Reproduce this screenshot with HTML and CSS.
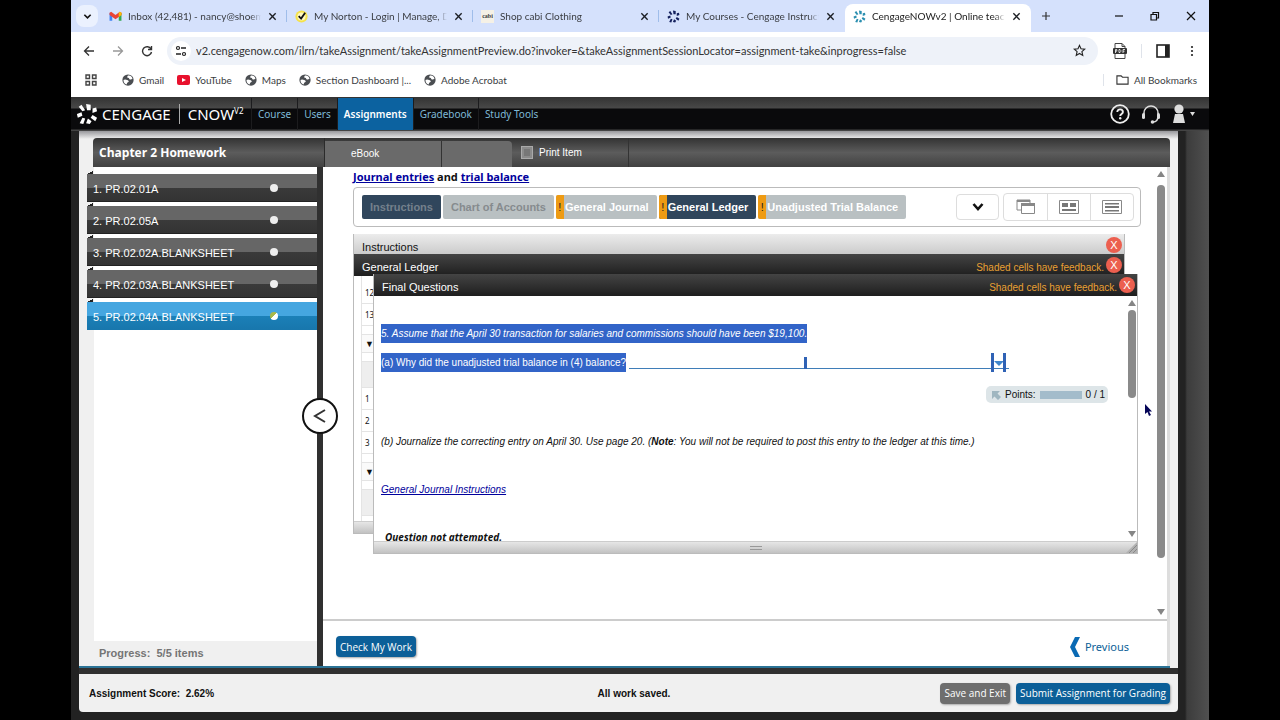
FILE: index.html
```html
<!DOCTYPE html>
<html lang="en">
<head>
    <meta charset="UTF-8">
    <meta name="viewport" content="width=device-width, initial-scale=1.0">
    <title>CengageNOWv2 | Online teaching and learning</title>
    <link rel="stylesheet" href="styles.css">
</head>
<body>
    <svg class="defs" aria-hidden="true">
        <symbol id="burst" viewBox="0 0 24 24">
            <path d="M11 1l5 1v6h-4z"/>
            <path d="M18 6l4-1 1 4-5 2z"/>
            <path d="M18 13l5 3-2 4-5-4z"/>
            <path d="M13 17l4 3-2 3-4-1z"/>
            <path d="M7 16l3 1-2 6-4-1z"/>
            <path d="M1 12l5-2 1 4-5 2z"/>
            <path d="M3 4l3-2 4 6-3 1z"/>
        </symbol>
        <symbol id="globe" viewBox="0 0 16 16">
            <circle cx="8" cy="8" r="7.5" fill="#4a4d51"/>
            <path d="M2 8c1-1 3-1 5 0s3 2 1 3-1 2-2 3C3 13 2 11 2 8zM8 2c3-.5 5 1 6 4-1 1-3 2-4 1s0-2-2-2-1-2 0-3z" fill="#fff"/>
        </symbol>
        <symbol id="cross" viewBox="0 0 10 10">
            <path d="M1.5 1.5l7 7M8.5 1.5l-7 7" fill="none" stroke="#1c1f24" stroke-width="1.5"/>
        </symbol>
    </svg>

    <div class="screen">
        <header class="browser">
            <div class="tab-strip">
                <button class="tab-search" aria-label="Search tabs">
                    <svg width="9" height="9" viewBox="0 0 10 10"><path d="M1.5 3L5 6.5 8.5 3" fill="none" stroke="#111" stroke-width="1.8"/></svg>
                </button>
                <div class="tab">
                    <svg class="favicon" viewBox="0 0 24 20"><path d="M1 3v15h5V8z" fill="#4285f4"/><path d="M23 3v15h-5V8z" fill="#34a853"/><path d="M1 3l3-2 8 6 8-6 3 2v4l-11 8L1 7z" fill="#ea4335"/><path d="M18 3l2-2 3 2v4l-5 4z" fill="#fbbc04"/></svg>
                    <span class="tab-title">Inbox (42,481) - nancy@shoem</span>
                    <button class="tab-close" aria-label="Close tab"><svg><use href="#cross"/></svg></button>
                </div>
                <div class="tab">
                    <svg class="favicon" viewBox="0 0 16 16"><circle cx="8" cy="8" r="7.5" fill="#f5e24b"/><circle cx="8" cy="8" r="5" fill="#fff8c0"/><path d="M4.5 7.5l3 3 5-7" fill="none" stroke="#111" stroke-width="2.2"/></svg>
                    <span class="tab-title">My Norton - Login | Manage, D</span>
                    <button class="tab-close" aria-label="Close tab"><svg><use href="#cross"/></svg></button>
                </div>
                <div class="tab">
                    <span class="favicon cabi">cabi</span>
                    <span class="tab-title">Shop cabi Clothing</span>
                    <button class="tab-close" aria-label="Close tab"><svg><use href="#cross"/></svg></button>
                </div>
                <div class="tab last">
                    <svg class="favicon" fill="#14205e"><use href="#burst"/></svg>
                    <span class="tab-title">My Courses - Cengage Instruct</span>
                    <button class="tab-close" aria-label="Close tab"><svg><use href="#cross"/></svg></button>
                </div>
                <div class="tab active">
                    <svg class="favicon" fill="#2b8fb0"><use href="#burst"/></svg>
                    <span class="tab-title">CengageNOWv2 | Online teach</span>
                    <button class="tab-close" aria-label="Close tab"><svg><use href="#cross"/></svg></button>
                </div>
                <button class="new-tab" aria-label="New tab"><svg width="10" height="10" viewBox="0 0 10 10"><path d="M5 1v8M1 5h8" stroke="#333" stroke-width="1.2"/></svg></button>
                <div class="window-controls">
                    <button aria-label="Minimize"><svg width="10" height="10" viewBox="0 0 10 10"><path d="M1 5h8" stroke="#111" stroke-width="1.2"/></svg></button>
                    <button aria-label="Restore"><svg width="10" height="10" viewBox="0 0 10 10"><path d="M1 3.5h5.5V9H1zM3 3V1.500h5.500V7H7" fill="none" stroke="#111" stroke-width="1.2"/></svg></button>
                    <button aria-label="Close"><svg width="10" height="10" viewBox="0 0 10 10"><path d="M1 1l8 8M9 1L1 9" stroke="#111" stroke-width="1.2"/></svg></button>
                </div>
            </div>

            <div class="toolbar">
                <button class="tool" aria-label="Back"><svg width="12" height="12" viewBox="0 0 12 12"><path d="M11 6H2M6 1.500L1.500 6 6 10.500" fill="none" stroke="#333" stroke-width="1.3"/></svg></button>
                <button class="tool" aria-label="Forward"><svg width="12" height="12" viewBox="0 0 12 12"><path d="M1 6h9M6 1.500L10.500 6 6 10.500" fill="none" stroke="#999" stroke-width="1.3"/></svg></button>
                <button class="tool" aria-label="Reload"><svg width="12" height="12" viewBox="0 0 12 12"><path d="M10 4A4.500 4.500 0 1 0 10.500 7M10.500 1v3.500H7" fill="none" stroke="#333" stroke-width="1.4"/></svg></button>
                <div class="address">
                    <button class="site-info" aria-label="Site information"><svg width="12" height="12" viewBox="0 0 12 12"><path d="M6 3h5M1 9h5" stroke="#222" stroke-width="1.4"/><circle cx="3" cy="3" r="1.5" fill="none" stroke="#222" stroke-width="1.2"/><circle cx="9" cy="9" r="1.5" fill="none" stroke="#222" stroke-width="1.2"/></svg></button>
                    <input class="url" type="text" aria-label="Address" value="v2.cengagenow.com/ilrn/takeAssignment/takeAssignmentPreview.do?invoker=&amp;takeAssignmentSessionLocator=assignment-take&amp;inprogress=false">
                    <button class="star" aria-label="Bookmark this page"><svg width="13" height="13" viewBox="0 0 14 14"><path d="M7 1.500l1.600 3.700 4 .4-3 2.700.9 4L7 10.200l-3.500 2.100.9-4-3-2.700 4-.4z" fill="none" stroke="#222" stroke-width="1.2"/></svg></button>
                </div>
                <button class="pdf" aria-label="Save as PDF"><svg width="16" height="18" viewBox="0 0 16 18"><path d="M3 6V1.500h7l3 3V6M3 12v4.500h10V12M10 1.500v3h3" fill="none" stroke="#444"/><rect x="1" y="6" width="14" height="6" rx="1" fill="#333"/><path d="M3.500 11V7.500h1.300v1.700H3.500M7 7.500v3h1l.8-1V8.300L8 7.500zM11 11V7.500h2M11 9.200h1.500" fill="none" stroke="#fff" stroke-width=".8"/></svg></button>
                <button class="side-panel" aria-label="Side panel"><svg width="14" height="14" viewBox="0 0 14 14"><rect x="1" y="1" width="12" height="12" fill="none" stroke="#222" stroke-width="1.6"/><path d="M9 1h4v12H9z" fill="#222"/></svg></button>
                <button class="more" aria-label="Menu"><svg width="4" height="12" viewBox="0 0 4 12" fill="#222"><circle cx="2" cy="2" r="1.1"/><circle cx="2" cy="6" r="1.1"/><circle cx="2" cy="10" r="1.1"/></svg></button>
            </div>

            <nav class="bookmarks">
                <button class="apps" aria-label="Apps"><svg width="12" height="12" viewBox="0 0 12 12"><path d="M1 1h3.500v3.500H1zM7.500 1H11v3.500H7.500zM1 7.500h3.500V11H1zM7.500 7.500H11V11H7.500z" fill="none" stroke="#444" stroke-width="1.4"/></svg></button>
                <a href="#"><svg class="mark"><use href="#globe"/></svg>Gmail</a>
                <a href="#"><svg class="mark wide" viewBox="0 0 13 10"><rect width="13" height="10" rx="2" fill="#e8112d"/><path d="M5 3l4 2-4 2z" fill="#fff"/></svg>YouTube</a>
                <a href="#"><svg class="mark"><use href="#globe"/></svg>Maps</a>
                <a href="#"><svg class="mark"><use href="#globe"/></svg>Section Dashboard |...</a>
                <a href="#"><svg class="mark"><use href="#globe"/></svg>Adobe Acrobat</a>
                <a href="#" class="all"><svg class="mark folder" viewBox="0 0 14 12"><path d="M1 10.500v-9h4.500L7 3h6v7.500z" fill="none" stroke="#333" stroke-width="1.2"/></svg>All Bookmarks</a>
            </nav>
        </header>

        <div class="app">
            <header class="app-header">
                <a href="#" class="brand">
                    <svg class="brand-mark" fill="#fff"><use href="#burst"/></svg>
                    <span>CENGAGE</span>
                    <span class="product">CNOW<sup>V2</sup></span>
                </a>
                <nav class="app-nav">
                    <a href="#">Course</a>
                    <a href="#">Users</a>
                    <a href="#" class="active">Assignments</a>
                    <a href="#">Gradebook</a>
                    <a href="#">Study Tools</a>
                </nav>
                <div class="app-tools">
                    <button aria-label="Help"><svg width="20" height="20" viewBox="0 0 20 20"><circle cx="10" cy="10" r="8.800" fill="none" stroke="#eee" stroke-width="1.8"/><path d="M7.300 8c0-3.600 5.600-3.400 5.600 0 0 2-2.700 2-2.700 4" fill="none" stroke="#eee" stroke-width="1.9"/><circle cx="10.200" cy="14.300" r="1.2" fill="#eee"/></svg></button>
                    <button aria-label="Support"><svg width="20" height="20" viewBox="0 0 20 20"><path d="M3 12V9a7 7 0 0 1 14 0v3c0 4-2 6-5 6" fill="none" stroke="#ddd" stroke-width="1.5"/><rect x="1" y="9" width="3" height="6" rx="1.5" fill="#ddd"/><rect x="16" y="9" width="3" height="6" rx="1.5" fill="#ddd"/><circle cx="11.500" cy="18" r="1.8" fill="#ddd"/></svg></button>
                    <button aria-label="Account"><svg width="24" height="20" viewBox="0 0 24 20" fill="#ddd"><circle cx="7" cy="5" r="4.6"/><path d="M3 10h8l2 9H1z"/><path d="M18 8h5l-2.500 4z"/></svg></button>
                </div>
            </header>

            <main class="panel">
                <div class="title-bar">
                    <h1>Chapter 2 Homework</h1>
                    <a href="#" class="book">eBook</a>
                    <span class="book-end"></span>
                    <a href="#" class="print"><svg width="12" height="13" viewBox="0 0 12 13"><rect x=".5" y=".5" width="11" height="12" fill="#8b8b8b" stroke="#aaa"/><path d="M3 3h6v7H3z" fill="#777"/></svg>Print Item</a>
                </div>

                <div class="columns">
                    <aside class="sidebar">
                        <ol class="items">
                            <li><a href="#">1. PR.02.01A<i class="dot"></i></a></li>
                            <li><a href="#">2. PR.02.05A<i class="dot"></i></a></li>
                            <li><a href="#">3. PR.02.02A.BLANKSHEET<i class="dot"></i></a></li>
                            <li><a href="#">4. PR.02.03A.BLANKSHEET<i class="dot"></i></a></li>
                            <li class="current"><a href="#">5. PR.02.04A.BLANKSHEET<i class="dot"></i></a></li>
                        </ol>
                        <p class="progress">Progress:&nbsp; 5/5 items</p>
                    </aside>
                    <div class="divider">
                        <button class="collapse" aria-label="Collapse list"><svg width="14" height="16" viewBox="0 0 14 16"><path d="M12 2L2 8l10 6" fill="none" stroke="#333" stroke-width="2"/></svg></button>
                    </div>

                    <section class="content">
                        <div class="work-area">
                            <div class="work">
                                <h2><a href="#">Journal entries</a> and <a href="#">trial balance</a></h2>
                                <div class="sheet-bar">
                                    <button class="sheet dark muted">Instructions</button>
                                    <button class="sheet muted">Chart of Accounts</button>
                                    <button class="sheet flagged">General Journal</button>
                                    <button class="sheet flagged dark">General Ledger</button>
                                    <button class="sheet flagged">Unadjusted Trial Balance</button>
                                    <button class="view expand" aria-label="More sheets"><svg width="12" height="10" viewBox="0 0 12 10"><path d="M1.500 2L6 7l4.500-5" fill="none" stroke="#111" stroke-width="2.6"/></svg></button>
                                    <div class="views">
                                        <button class="view" aria-label="Cascade"><svg width="20" height="16" viewBox="0 0 20 16"><path d="M5 11H1V1h13v3" fill="none" stroke="#888"/><path d="M1 1h13v2H1zM5 4h14v3H5z" fill="#888"/><path d="M5.500 4.500h13v10h-13z" fill="none" stroke="#888"/></svg></button>
                                        <button class="view" aria-label="Tile"><svg width="20" height="16" viewBox="0 0 20 16"><path d="M.5 1.500h19v13H.5z" fill="none" stroke="#888"/><path d="M3 4h6v4H3zM11 4h6v4h-6zM3 10h14v2H3z" fill="#777"/></svg></button>
                                        <button class="view" aria-label="Stack"><svg width="20" height="16" viewBox="0 0 20 16"><path d="M.5 1.500h19v13H.5z" fill="none" stroke="#888"/><path d="M3 4h14v1.500H3zM3 7h14v2H3zM3 11h14v1.500H3z" fill="#777"/></svg></button>
                                    </div>
                                </div>

                                <div class="canvas">
                                    <div class="window instructions">
                                        <div class="window-head light"><span>Instructions</span><button class="window-close" aria-label="Close Instructions">X</button></div>
                                    </div>
                                    <div class="window ledger">
                                        <div class="window-head"><span>General Ledger</span><em>Shaded cells have feedback.</em><button class="window-close" aria-label="Close General Ledger">X</button></div>
                                        <div class="rows">
                                            <span class="row first">12</span>
                                            <span class="row">13</span>
                                            <span class="row thin"></span>
                                            <span class="row fold">▼</span>
                                            <span class="row thin"></span>
                                            <span class="row shade"></span>
                                            <span class="row">1</span>
                                            <span class="row">2</span>
                                            <span class="row">3</span>
                                            <span class="row thin"></span>
                                            <span class="row fold">▼</span>
                                            <span class="row thin"></span>
                                            <span class="row shade"></span>
                                        </div>
                                        <div class="window-foot"></div>
                                    </div>
                                    <div class="window questions">
                                        <div class="window-head"><span>Final Questions</span><em>Shaded cells have feedback.</em><button class="window-close" aria-label="Close Final Questions">X</button></div>
                                        <div class="question-area">
                                            <div class="question-text">
                                                <p><i class="selected">5. Assume that the April 30 transaction for salaries and commissions should have been $19,100.</i></p>
                                                <div class="answer">
                                                    <label class="selected" for="reason">(a) Why did the unadjusted trial balance in (4) balance?</label>
                                                    <span class="blank">
                                                        <select id="reason"><option></option></select>
                                                        <i class="caret middle"></i>
                                                        <i class="caret near"></i>
                                                        <i class="arrow"></i>
                                                        <i class="caret end"></i>
                                                    </span>
                                                </div>
                                                <div class="points">
                                                    <svg width="10" height="10" viewBox="0 0 10 10"><path d="M1 1h8L6.500 3.500 10 7 7 10 3.500 6.500 1 9z" fill="#9fb6c0"/></svg>
                                                    <span>Points:</span><span class="meter"></span><span>0 / 1</span>
                                                </div>
                                                <p class="spaced"><i>(b) Journalize the correcting entry on April 30. Use page 20. (<b>Note</b>: You will not be required to post this entry to the ledger at this time.)</i></p>
                                                <p class="spaced"><a href="#"><i>General Journal Instructions</i></a></p>
                                                <p class="spaced status">Question not attempted.</p>
                                            </div>
                                            <div class="scrollbar"><i class="up"></i><i class="thumb short"></i><i class="down"></i></div>
                                        </div>
                                        <div class="window-foot"><i class="grip"></i><svg class="corner" width="12" height="12" viewBox="0 0 12 12"><path d="M12 1v11H1z" fill="#b0b0b0"/><path d="M12 4L4 12M12 8l-4 4" stroke="#888"/></svg></div>
                                    </div>
                                    <svg class="pointer" width="9" height="13" viewBox="0 0 9 13"><path d="M1 0v10l2.500-2L5 12l2-1-2-3.500h3z" fill="#050558"/></svg>
                                </div>
                            </div>
                            <div class="scrollbar"><i class="up"></i><i class="thumb"></i><i class="down"></i></div>
                        </div>
                        <div class="content-foot">
                            <button class="btn blue">Check My Work</button>
                            <a href="#" class="previous"><svg width="12" height="20" viewBox="0 0 12 20"><path d="M6 0h5L6 10l5 10H6L1 10z" fill="#0a6ab4"/></svg>Previous</a>
                        </div>
                    </section>
                </div>

                <footer class="score-bar">
                    <b class="score">Assignment Score:&nbsp; 2.62%</b>
                    <b class="saved">All work saved.</b>
                    <div class="actions">
                        <button class="btn">Save and Exit</button>
                        <button class="btn blue">Submit Assignment for Grading</button>
                    </div>
                </footer>
            </main>
        </div>
    </div>
</body>
</html>
```
FILE: styles.css
```css
* {
    margin: 0;
    padding: 0;
    box-sizing: border-box;
}

body {
    min-height: 100vh;
    background: #000;
    font-family: "Liberation Sans", Arial, sans-serif;
    font-size: 11px;
    color: #111;
}

button {
    border: none;
    background: none;
    font: inherit;
    color: inherit;
    cursor: pointer;
    display: flex;
    align-items: center;
    justify-content: center;
    flex-shrink: 0;
}

a {
    color: #00009c;
}

svg {
    display: block;
    flex-shrink: 0;
}

.defs {
    position: absolute;
    width: 0;
    height: 0;
}

.screen {
    height: 100vh;
    margin: 0 71px;
    display: flex;
    flex-direction: column;
    overflow: hidden;
}

/* browser chrome */
.browser {
    background: #fff;
    font-family: Lato, "Open Sans", sans-serif;
    font-size: 10px;
    color: #3a3d42;
}

.tab-strip {
    height: 32px;
    display: flex;
    align-items: center;
    background: #d5e1fc;
    padding-left: 5px;
}

.tab-search {
    width: 22px;
    height: 22px;
    border-radius: 8px;
    background: #ebf1fe;
    margin-right: 3px;
}

.tab {
    flex: 0 1 186px;
    min-width: 0;
    height: 28px;
    display: flex;
    align-items: center;
    padding: 0 8px;
    position: relative;
}

.tab::after {
    content: "";
    position: absolute;
    right: 0;
    width: 1px;
    height: 12px;
    background: #9fbdea;
}

.tab.last::after,
.tab.active::after {
    display: none;
}

.favicon {
    width: 13px;
    height: 13px;
    margin-right: 6px;
    flex-shrink: 0;
}

.cabi {
    background: #f5f1e6;
    font: bold 6px/13px "Liberation Serif", serif;
    text-align: center;
    overflow: hidden;
}

.tab-title {
    flex: 1;
    overflow: hidden;
    white-space: nowrap;
    -webkit-mask-image: linear-gradient(to right, #000 92%, transparent);
    mask-image: linear-gradient(to right, #000 92%, transparent);
}

.tab-close {
    width: 14px;
    height: 14px;
    margin-left: 4px;
}

.tab-close svg {
    width: 9px;
    height: 9px;
}

.tab.active {
    background: #fff;
    border-radius: 8px 8px 0 0;
    align-self: flex-end;
    padding-bottom: 4px;
    color: #222;
}

.new-tab {
    width: 22px;
    height: 22px;
    margin-left: 4px;
}

.window-controls {
    margin-left: auto;
    display: flex;
}

.window-controls button {
    width: 36px;
    height: 32px;
}

.toolbar {
    height: 37px;
    display: flex;
    align-items: center;
    padding: 0 10px 0 3px;
}

.tool {
    width: 29px;
    height: 28px;
}

.address {
    flex: 1;
    height: 28px;
    display: flex;
    align-items: center;
    margin-left: 6px;
    padding: 0 12px 0 4px;
    border-radius: 14px;
    background: #eef2f9;
}

.site-info {
    width: 20px;
    height: 20px;
    border-radius: 10px;
    background: #fff;
    margin-right: 5px;
}

.url {
    flex: 1;
    min-width: 0;
    border: none;
    outline: none;
    background: none;
    font: 11px Lato, "Open Sans", sans-serif;
    color: #333;
}

.pdf {
    margin-left: 14px;
    padding-right: 13px;
}

.side-panel {
    border-left: 1px solid #dfe3ea;
    padding-left: 14px;
}

.more {
    width: 14px;
    margin-left: 15px;
}

.bookmarks {
    height: 28px;
    display: flex;
    align-items: center;
    gap: 13px;
    padding: 0 12px 7px 14px;
}

.apps {
    padding-right: 12px;
}

.bookmarks a {
    display: flex;
    align-items: center;
    gap: 5px;
    color: #3a3d42;
    text-decoration: none;
    white-space: nowrap;
}

.mark {
    width: 12px;
    height: 12px;
}

.wide,
.folder {
    width: 13px;
}

.bookmarks .all {
    margin-left: auto;
    border-left: 1px solid #dfe3ea;
    padding-left: 12px;
}

/* application */
.app {
    flex: 1;
    min-height: 0;
    display: flex;
    flex-direction: column;
    background: linear-gradient(to right, #222 calc(100% - 24px), #3c3c3c calc(100% - 22px), #505050);
}

.app-header {
    height: 34px;
    display: flex;
    align-items: stretch;
    background: linear-gradient(#333 0, #484848 11px, #0a0a0c 12px, #0a0a0c 32px, #444 33px);
    font-family: "Noto Sans", "Open Sans", sans-serif;
    font-size: 10px;
    padding: 1px 13px 1px 5px;
}

.brand {
    display: flex;
    align-items: center;
    color: #fff;
    text-decoration: none;
    font-size: 15px;
    gap: 4px;
    width: 175px;
}

.brand-mark {
    width: 22px;
    height: 22px;
}

.product {
    border-left: 1px solid #aaa;
    margin-left: 4px;
    padding-left: 8px;
    line-height: 20px;
    white-space: nowrap;
}

.product sup {
    font-size: 8px;
    line-height: 8px;
}

.app-nav {
    display: flex;
}

.app-nav a {
    padding: 0 6px;
    line-height: 32px;
    color: #7fb9d6;
    text-decoration: none;
    border-left: 1px solid #1c1c1e;
}

.app-nav .active {
    background: #0c62a0;
    color: #fff;
    font-weight: 600;
}

.app-tools {
    margin-left: auto;
    display: flex;
    gap: 11px;
}

.panel {
    flex: 1;
    min-height: 0;
    display: flex;
    flex-direction: column;
    margin: 0 31px 8px 8px;
    padding-top: 7px;
    border-radius: 0 0 4px 4px;
    background: linear-gradient(#98989c, #f0f0f0 8px);
}

.title-bar {
    height: 29px;
    display: flex;
    margin: 0 8px 0 14px;
    border-radius: 4px 4px 0 0;
    background: linear-gradient(#333, #5c5c5c 50%, #414141);
    color: #fff;
    font-size: 10px;
}

.title-bar h1 {
    width: 232px;
    padding-left: 6px;
    font: bold 12px/29px "Open Sans", "Noto Sans", sans-serif;
    border-right: 1px solid #2b2b2b;
}

.title-bar a {
    color: #fff;
    text-decoration: none;
}

.book,
.book-end {
    background: #6a6a6a;
    margin-top: 3px;
}

.book {
    width: 117px;
    padding-left: 26px;
    line-height: 26px;
    border-right: 1px solid #333;
}

.book-end {
    width: 70px;
    border-radius: 0 4px 0 0;
}

.print {
    width: 117px;
    display: flex;
    align-items: center;
    gap: 6px;
    padding-left: 9px;
    border-right: 1px solid #333;
}

.columns {
    flex: 1;
    min-height: 0;
    display: flex;
    margin-right: 8px;
    border-bottom: 2px solid #2b7396;
}

.sidebar {
    width: 238px;
    display: flex;
    flex-direction: column;
    padding-left: 15px;
}

.items {
    flex: 1;
    list-style: none;
    background: #fff;
    padding-top: 4px;
}

.items li {
    margin-left: -7px;
    padding-top: 3px;
    margin-bottom: 1px;
    background: linear-gradient(to bottom right, transparent 50%, #222 50%) 0 0 / 6px 3px no-repeat;
}

.items a {
    height: 28px;
    display: flex;
    align-items: center;
    justify-content: space-between;
    padding: 2px 39px 0 6px;
    background: linear-gradient(#666 50%, #3a3a3a 51%, #333);
    border-bottom: 1px solid #222;
    color: #fff;
    font-size: 11px;
    text-decoration: none;
}

.items .current a {
    background: linear-gradient(#45a6e0 50%, #1b80b8 51%, #1877ad);
    border-bottom-color: #1877ad;
}

.dot {
    width: 8px;
    height: 8px;
    margin-bottom: 2px;
    border-radius: 50%;
    background: #eee;
}

.current .dot {
    background: linear-gradient(135deg, #a8b84a 50%, #fff 50%);
}

.progress {
    height: 25px;
    padding-left: 5px;
    font-weight: bold;
    font-size: 11px;
    line-height: 25px;
    color: #757575;
}

.divider {
    width: 6px;
    background: #303030;
    position: relative;
}

.collapse {
    position: absolute;
    top: 231px;
    left: -15px;
    width: 36px;
    height: 36px;
    border: 2px solid #111;
    border-radius: 50%;
    background: #fff;
    z-index: 5;
}

.content {
    flex: 1;
    min-width: 0;
    display: flex;
    flex-direction: column;
    background: #fff;
    border-right: 3px solid #ddd;
}

.work-area {
    flex: 1;
    min-height: 0;
    display: flex;
    border-bottom: 2px solid #ccc;
}

.work {
    flex: 1;
    min-width: 0;
    padding: 3px 14px 0 30px;
}

.work h2 {
    font: bold 11px/14px "Noto Sans", Verdana, sans-serif;
}

.sheet-bar {
    height: 40px;
    display: flex;
    align-items: center;
    gap: 2px;
    margin-top: 3px;
    padding: 0 6px 0 8px;
    border: 1px solid #bbb;
    border-radius: 4px;
}

.sheet {
    height: 24px;
    padding: 0 8px;
    border-radius: 2px;
    background: #b9c0c2;
    color: #fff;
    font-weight: bold;
    font-size: 11px;
    white-space: nowrap;
}

.sheet.dark {
    background: #30465c;
}

.sheet.muted {
    color: #868b8e;
}

.sheet.dark.muted {
    color: #74808c;
}

.sheet.flagged {
    padding-left: 0;
}

.flagged::before {
    content: "!";
    width: 8px;
    margin-right: 1px;
    line-height: 24px;
    background: #ee9b14;
    border-radius: 2px 0 0 2px;
    color: #222;
    font-weight: normal;
}

.view {
    width: 43px;
    height: 26px;
}

.expand,
.views {
    border: 1px solid #ddd;
    border-radius: 4px;
}

.expand {
    margin-left: auto;
    margin-right: 2px;
}

.views {
    display: flex;
}

.views .view + .view {
    border-left: 1px solid #ddd;
}

/* overlapping worksheet windows */
.canvas {
    position: relative;
    margin-top: 7px;
}

.window {
    position: absolute;
    display: flex;
    flex-direction: column;
    background: #fff;
    border: 1px solid #bbb;
    border-top: none;
}

.instructions {
    top: 0;
    left: 0;
    right: 16px;
}

.ledger {
    top: 20px;
    left: 0;
    right: 16px;
    height: 280px;
}

.questions {
    top: 40px;
    left: 20px;
    right: 3px;
    height: 280px;
}

.window-head {
    height: 22px;
    display: flex;
    align-items: center;
    flex-shrink: 0;
    padding: 3px 2px 0 8px;
    background: linear-gradient(#444, #1e1e1e);
    color: #fff;
}

.window-head.light {
    background: linear-gradient(#ececec, #c8c8c8);
    color: #111;
}

.window-head em {
    margin-left: auto;
    padding-top: 2px;
    font-style: normal;
    font-size: 10px;
    color: #e9a033;
}

.window-head.light .window-close {
    margin-left: auto;
}

.window-close {
    width: 16px;
    height: 16px;
    margin: 0 0 4px 2px;
    border-radius: 50%;
    background: #ec5f4f;
    color: #fff;
}

.window-foot {
    height: 12px;
    display: flex;
    align-items: center;
    justify-content: center;
    flex-shrink: 0;
    position: relative;
    background: linear-gradient(#e6e6e6, #c2c2c2);
    border-top: 1px solid #ccc;
}

.rows {
    flex: 1;
    min-height: 0;
    margin-left: 7px;
    overflow: hidden;
    border-left: 1px solid #e4e4e4;
    font: 8px "Noto Sans", sans-serif;
}

.row {
    height: 22px;
    width: 20px;
    display: flex;
    align-items: center;
    padding-left: 3px;
    border-bottom: 1px solid #e4e4e4;
}

.row.first {
    height: 28px;
    padding-top: 6px;
}

.row.fold {
    height: 18px;
    font-size: 9px;
    background: #fafafa;
}

.row.shade {
    height: 26px;
    background: #eee;
}

.row.thin {
    height: 9px;
}

.question-area {
    flex: 1;
    min-height: 0;
    display: flex;
}

.question-text {
    flex: 1;
    min-width: 0;
    overflow: hidden;
    padding: 28px 20px 0 7px;
    font-size: 10px;
    line-height: 19px;
    white-space: nowrap;
}

.selected {
    display: inline-block;
    background: #3264c8;
    color: #fff;
}

.answer {
    display: flex;
    margin-top: 10px;
}

.blank {
    width: 380px;
    height: 19px;
    margin-left: 3px;
    position: relative;
}

.blank select {
    display: block;
    width: 100%;
    height: 16px;
    appearance: none;
    border: none;
    border-bottom: 1px solid #3f7db8;
    border-radius: 0;
    background: #fff;
}

.caret {
    position: absolute;
    top: 0;
    width: 3px;
    height: 19px;
    background: #2f62b5;
}

.caret.middle {
    top: 4px;
    left: 175px;
    height: 12px;
}

.caret.near {
    right: 15px;
}

.caret.end {
    right: 3px;
}

.arrow {
    position: absolute;
    top: 8px;
    right: 5px;
    border: 5px solid transparent;
    border-top-color: #3f86cc;
    border-bottom: none;
}

.points {
    width: 122px;
    height: 17px;
    display: flex;
    align-items: center;
    gap: 4px;
    margin: 14px 0 0 605px;
    padding-left: 5px;
    border-radius: 5px;
    background: #dde5e8;
}

.meter {
    width: 42px;
    height: 8px;
    background: #a3bccb;
}

.spaced {
    margin-top: 29px;
}

.status {
    padding-left: 4px;
    font-family: "Noto Sans", sans-serif;
    font-weight: bold;
    font-style: italic;
}

.scrollbar {
    width: 12px;
    flex-shrink: 0;
    display: flex;
    flex-direction: column;
    align-items: center;
    padding: 4px 0;
}

.question-area .scrollbar {
    width: 10px;
}

.scrollbar .up {
    border: 4px solid transparent;
    border-bottom: 6px solid #858585;
    border-top: none;
}

.scrollbar .down {
    margin-top: auto;
    border: 4px solid transparent;
    border-top: 6px solid #858585;
    border-bottom: none;
}

.thumb {
    width: 8px;
    height: 84%;
    margin-top: 8px;
    border-radius: 4px;
    background: #8a8a8a;
}

.thumb.short {
    height: 37%;
    margin-top: 4px;
}

.grip {
    width: 12px;
    height: 4px;
    border-top: 1px solid #999;
    border-bottom: 1px solid #999;
}

.corner {
    position: absolute;
    right: 0;
    bottom: 0;
}

.pointer {
    position: absolute;
    top: 170px;
    left: 791px;
}

.content-foot {
    height: 45px;
    display: flex;
    align-items: center;
    justify-content: space-between;
    padding: 6px 38px 0 13px;
}

.btn {
    height: 21px;
    padding: 0 4px;
    border-radius: 4px;
    background: #6e6e6e;
    color: #fff;
    font-family: "Open Sans", "Noto Sans", sans-serif;
    font-size: 10px;
    white-space: nowrap;
    box-shadow: 1px 1px 2px #aaa;
}

.btn.blue {
    background: #0c5f98;
}

.previous {
    display: flex;
    align-items: center;
    gap: 4px;
    color: #0c5f98;
    font: 11px "Noto Sans", "Open Sans", sans-serif;
    text-decoration: none;
}

.score-bar {
    height: 44px;
    flex-shrink: 0;
    display: flex;
    align-items: center;
    padding: 6px 8px 0 10px;
    font-size: 10px;
    background: linear-gradient(#303030 6px, transparent 6px);
}

.score,
.actions {
    flex: 1;
}

.saved {
    padding-left: 9px;
}

.actions {
    display: flex;
    justify-content: flex-end;
    gap: 6px;
}
```
